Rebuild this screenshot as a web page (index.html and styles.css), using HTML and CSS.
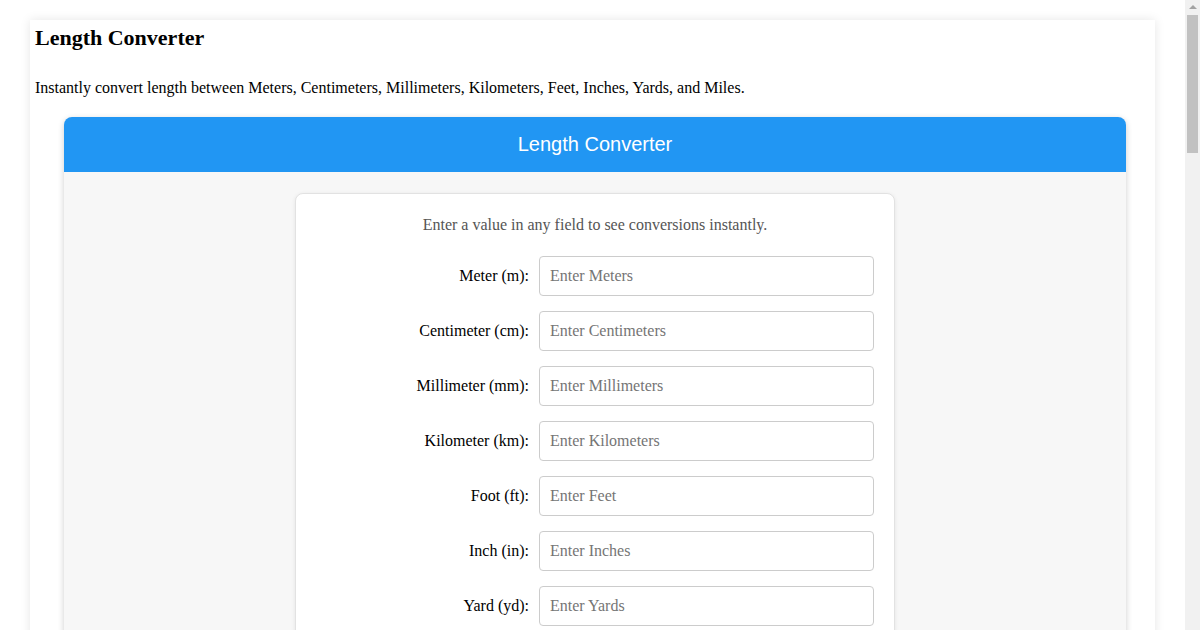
FILE: index.html
```html
<!DOCTYPE html>
<html lang="en">
<head>
<meta charset="utf-8">
<title>Length Converter</title>
<link rel="stylesheet" href="styles.css">
</head>
<body>
<div class="page">
  <h1 class="title">Length Converter</h1>
  <p class="lead">Instantly convert length between Meters, Centimeters, Millimeters, Kilometers, Feet, Inches, Yards, and Miles.</p>
  <div class="card">
    <div class="card-head">Length Converter</div>
    <div class="card-body">
      <div class="panel">
        <p class="intro">Enter a value in any field to see conversions instantly.</p>
        <div class="row"><label class="lbl" for="m">Meter (m):</label><input class="field" id="m" type="text" placeholder="Enter Meters"></div>
        <div class="row"><label class="lbl" for="cm">Centimeter (cm):</label><input class="field" id="cm" type="text" placeholder="Enter Centimeters"></div>
        <div class="row"><label class="lbl" for="mm">Millimeter (mm):</label><input class="field" id="mm" type="text" placeholder="Enter Millimeters"></div>
        <div class="row"><label class="lbl" for="km">Kilometer (km):</label><input class="field" id="km" type="text" placeholder="Enter Kilometers"></div>
        <div class="row"><label class="lbl" for="ft">Foot (ft):</label><input class="field" id="ft" type="text" placeholder="Enter Feet"></div>
        <div class="row"><label class="lbl" for="in">Inch (in):</label><input class="field" id="in" type="text" placeholder="Enter Inches"></div>
        <div class="row"><label class="lbl" for="yd">Yard (yd):</label><input class="field" id="yd" type="text" placeholder="Enter Yards"></div>
        <div class="row"><label class="lbl" for="mi">Mile (mi):</label><input class="field" id="mi" type="text" placeholder="Enter Miles"></div>
      </div>
    </div>
  </div>
</div>
<div class="scrollbar" aria-hidden="true">
  <div class="sb-arrow"></div>
  <div class="sb-thumb"></div>
</div>
</body>
</html>
```

FILE: styles.css
```css
html, body {
  margin: 0;
  padding: 0;
  background: #fff;
}
body {
  padding: 20px 45px 20px 30px;
  font-family: "Liberation Serif", "Times New Roman", serif;
  font-size: 16px;
  color: #000;
}
.page {
  background: #fff;
  padding: 5px 5px 20px;
  box-shadow: 0 0 10px rgba(0, 0, 0, 0.1);
}
.title {
  margin: 0 0 28px;
  font-size: 22px;
  font-weight: bold;
}
.lead {
  margin: 0 0 20px;
}
.card {
  margin: 0 24px 0 29px;
  border-radius: 8px;
  overflow: hidden;
  box-shadow: 0 2px 6px rgba(0, 0, 0, 0.2);
  background: #f7f7f7;
}
.card-head {
  background: #2196f3;
  color: #fff;
  font-family: "Liberation Sans", Arial, sans-serif;
  font-size: 20px;
  text-align: center;
  padding: 16px 0;
  line-height: 23px;
}
.card-body {
  padding: 21px 20px 20px;
}
.panel {
  width: 600px;
  box-sizing: border-box;
  margin: 0 auto;
  background: #fff;
  border: 1px solid #e2e2e2;
  border-radius: 8px;
  padding: 22px 20px 5px;
  box-shadow: 0 1px 4px rgba(0, 0, 0, 0.08);
}
.intro {
  margin: 0 0 22px;
  text-align: center;
  color: #555;
}
.row {
  display: flex;
  align-items: center;
  margin-bottom: 15px;
}
.lbl {
  flex: 1;
  text-align: right;
  padding-right: 10px;
}
.field {
  width: 335px;
  height: 40px;
  box-sizing: border-box;
  border: 1px solid #ccc;
  border-radius: 4px;
  padding: 0 10px;
  font-family: "Liberation Serif", "Times New Roman", serif;
  font-size: 16px;
  color: #000;
  background: #fff;
}
.field::placeholder {
  color: #757575;
}
.scrollbar {
  position: fixed;
  top: 0;
  right: 0;
  bottom: 0;
  width: 15px;
  background: #f1f1f1;
  display: flex;
  flex-direction: column;
  align-items: center;
}
.sb-arrow {
  width: 0;
  height: 0;
  margin-top: 5px;
  border-left: 4px solid transparent;
  border-right: 4px solid transparent;
  border-bottom: 4px solid #a3a3a3;
}
.sb-thumb {
  margin-top: 6px;
  width: 11px;
  height: 138px;
  background: #c1c1c1;
}
```
